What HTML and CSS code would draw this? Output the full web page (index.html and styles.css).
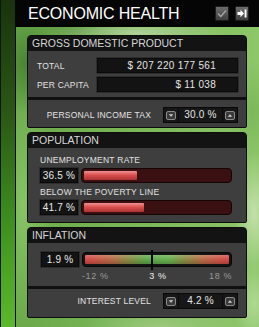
FILE: index.html
```html
<!DOCTYPE html>
<html>
<head>
<meta charset="utf-8">
<link rel="stylesheet" href="styles.css">
</head>
<body>
<div class="window">
  <div class="strip"></div>
  <div class="main">
    <header class="titlebar">
      <h1 class="title">ECONOMIC HEALTH</h1>
      <div class="tbtns">
        <div class="tbtn">
          <svg width="10" height="9" viewBox="0 0 10 9"><path d="M1 4.5 L3.8 7.5 L9 1.5" fill="none" stroke="#a8a8a8" stroke-width="1.3"/></svg>
        </div>
        <div class="tbtn">
          <svg width="10" height="9" viewBox="0 0 10 9"><path d="M0.5 3 H3.5 V0.8 L7 4.5 L3.5 8.2 V6 H0.5 Z" fill="#fff"/><rect x="7.6" y="0.5" width="1.9" height="8" fill="#fff"/></svg>
        </div>
      </div>
    </header>
    <div class="map">
      <div class="panel">
        <section class="sec">
          <div class="sec-head">GROSS DOMESTIC PRODUCT</div>
          <div class="gdp-body">
            <div class="kv"><span class="lbl">TOTAL</span><span class="valbox">$ 207 220 177 561</span></div>
            <div class="kv"><span class="lbl">PER CAPITA</span><span class="valbox">$ 11 038</span></div>
          </div>
          <div class="foot foot-tax">
            <span class="lbl">PERSONAL INCOME TAX</span>
            <div class="spinner">
              <div class="sbtn"><svg width="10" height="9" viewBox="0 0 10 9"><rect x="0.5" y="0.5" width="9" height="8" rx="1.5" fill="#3a3a3a" stroke="#8a8a8a"/><path d="M2.8 3.2 H7.2 L5 5.8 Z" fill="#cfcfcf"/></svg></div>
              <div class="sval">30.0 %</div>
              <div class="sbtn"><svg width="10" height="9" viewBox="0 0 10 9"><rect x="0.5" y="0.5" width="9" height="8" rx="1.5" fill="#3a3a3a" stroke="#8a8a8a"/><path d="M2.8 5.8 H7.2 L5 3.2 Z" fill="#cfcfcf"/></svg></div>
            </div>
          </div>
        </section>

        <section class="sec">
          <div class="sec-head">POPULATION</div>
          <div class="pop-body">
            <div class="mlabel">UNEMPLOYMENT RATE</div>
            <div class="meter">
              <div class="pct">36.5 %</div>
              <div class="rbar"><div class="rfill" style="width:36.5%"></div></div>
            </div>
            <div class="mlabel second">BELOW THE POVERTY LINE</div>
            <div class="meter">
              <div class="pct">41.7 %</div>
              <div class="rbar"><div class="rfill" style="width:41.7%"></div></div>
            </div>
          </div>
        </section>

        <section class="sec">
          <div class="sec-head">INFLATION</div>
          <div class="inf-body">
            <div class="meter">
              <div class="pct">1.9 %</div>
              <div class="gbar"><div class="gfill"></div><div class="marker" style="left:46.3%"></div></div>
            </div>
            <div class="scale">
              <span class="s-min">-12 %</span>
              <span class="s-mid">3 %</span>
              <span class="s-max">18 %</span>
            </div>
          </div>
          <div class="foot foot-int">
            <span class="lbl">INTEREST LEVEL</span>
            <div class="spinner">
              <div class="sbtn"><svg width="10" height="9" viewBox="0 0 10 9"><rect x="0.5" y="0.5" width="9" height="8" rx="1.5" fill="#3a3a3a" stroke="#8a8a8a"/><path d="M2.8 3.2 H7.2 L5 5.8 Z" fill="#cfcfcf"/></svg></div>
              <div class="sval">4.2 %</div>
              <div class="sbtn"><svg width="10" height="9" viewBox="0 0 10 9"><rect x="0.5" y="0.5" width="9" height="8" rx="1.5" fill="#3a3a3a" stroke="#8a8a8a"/><path d="M2.8 5.8 H7.2 L5 3.2 Z" fill="#cfcfcf"/></svg></div>
            </div>
          </div>
        </section>
      </div>
    </div>
  </div>
</div>
</body>
</html>
```

FILE: styles.css
```css
* { box-sizing: border-box; margin: 0; padding: 0; }
html, body { width: 259px; height: 327px; overflow: hidden; background: #000; }
body { font-family: "Liberation Sans", Arial, sans-serif; color: #dcdcdc; }

.window { display: flex; height: 327px; }

.strip {
  width: 16px; flex: none;
  background: linear-gradient(#1a330d, #2a5816 35%, #449a22 75%, #5cb82c);
  border-left: 1px solid #0c1806;
  border-right: 1px solid #060606;
}

.main { flex: 1; display: flex; flex-direction: column; min-width: 0; }

.titlebar {
  height: 27px; flex: none; background: #050505;
  display: flex; align-items: center; justify-content: space-between;
  padding: 0 10px 0 12px;
}
.title { font-size: 16px; font-weight: normal; color: #fff; letter-spacing: -0.2px; line-height: 27px; }
.tbtns { display: flex; gap: 6px; }
.tbtn {
  width: 14px; height: 15px; border: 1px solid #1e1e1e; border-radius: 1px;
  background: linear-gradient(#6c6c6c, #3e3e3e);
  display: flex; align-items: center; justify-content: center;
}

.map {
  flex: 1; padding: 8px 12px 0 11px;
  background-color: #74b052;
  background-image:
    radial-gradient(ellipse 30px 50px at 4% 12%, #4a8434, transparent),
    radial-gradient(ellipse 30px 120px at 3% 60%, #88c466, transparent),
    radial-gradient(ellipse 90px 14px at 50% 2%, #b0d29a, transparent),
    radial-gradient(ellipse 60px 20px at 25% 1%, #5a9640, transparent),
    radial-gradient(ellipse 20px 60px at 98% 62%, #c4e0ac, transparent),
    radial-gradient(ellipse 20px 40px at 98% 92%, #b0d894, transparent),
    radial-gradient(ellipse 30px 50px at 97% 28%, #7cb85a, transparent),
    radial-gradient(ellipse 80px 20px at 60% 100%, #9cc87c, transparent),
    linear-gradient(90deg, #6aa84a, #7ab858 50%, #8ec66a);
}

.panel { width: 220px; display: flex; flex-direction: column; gap: 4px; }

.sec {
  border: 1px solid #0d0d0d; border-radius: 4px 4px 2px 2px;
  background: #3e3e3e; overflow: hidden;
}
.sec-head {
  height: 15px; background: #131313; color: #d6d6d6;
  font-size: 10.5px; line-height: 15px; padding-left: 4px;
}

.lbl { font-size: 8.5px; letter-spacing: 0.2px; color: #e2e2e2; }

.gdp-body { padding: 7px 8px 5px 9px; display: flex; flex-direction: column; gap: 4px; }
.kv { display: flex; align-items: center; height: 15px; }
.kv .lbl { width: 60px; flex: none; }
.valbox {
  flex: 1; height: 15px; background: #131313; border: 1px solid #0a0a0a;
  box-shadow: 0 0 0 1px #2e2e2e;
  text-align: right; padding-right: 21px;
  font-size: 10px; line-height: 13px; letter-spacing: 0.3px; color: #e4e4e4;
}

.foot {
  border-top: 3px solid #111;
  display: flex; justify-content: flex-end; align-items: center; gap: 12px;
  padding: 7px 8px 4px 8px;
}
.foot-int { padding: 4px 8px 8px 8px; }
.spinner {
  width: 75px; height: 16px; flex: none; display: flex;
  background: #171717; border: 1px solid #090909;
}
.sbtn { width: 15px; flex: none; display: flex; align-items: center; justify-content: center; }
.sbtn:first-child { border-right: 1px solid #0a0a0a; }
.sbtn:last-child { border-left: 1px solid #0a0a0a; }
.sval { flex: 1; text-align: center; font-size: 10px; line-height: 14px; color: #e6e6e6; letter-spacing: 0.2px; }

.pop-body { padding: 7px 14px 7px 12px; }
.mlabel { height: 11px; line-height: 11px; font-size: 8.5px; letter-spacing: 0.25px; color: #e2e2e2; margin-bottom: 2px; }
.mlabel.second { margin-top: 4px; }
.meter { display: flex; gap: 3px; height: 15px; }
.pct {
  width: 38px; flex: none; background: #131313; border: 1px solid #0a0a0a;
  box-shadow: 0 0 0 1px #2e2e2e;
  font-size: 10px; line-height: 13px; text-align: center; color: #e8e8e8; letter-spacing: 0.2px;
}
.rbar {
  flex: 1; background: #3a1012; border: 1px solid #160505; border-radius: 4px;
  padding: 2px; display: flex;
}
.rfill {
  height: 100%; border-radius: 1px;
  background: linear-gradient(#f29292, #d85050 45%, #ae3030);
}

.inf-body { padding: 9px 14px 4px 13px; }
.gbar {
  flex: 1; position: relative; background: #141414; border: 1px solid #070707;
  border-radius: 4px; padding: 2px;
}
.gfill {
  height: 100%; border-radius: 1px;
  background:
    linear-gradient(rgba(255,255,255,0.22), rgba(255,255,255,0) 50%, rgba(0,0,0,0.2)),
    linear-gradient(90deg, #d84848, #b86a48 18%, #8a8a44 30%, #5ea84a 42%, #66b050 58%, #8a8a44 70%, #b86a48 82%, #d84848);
}
.marker {
  position: absolute; top: -3px; bottom: -4px; width: 2px; margin-left: -1px;
  background: #050505;
}
.scale {
  margin: 3px 0 0 41px; height: 12px; line-height: 12px;
  display: grid; grid-template-columns: 1fr auto 1fr;
  font-size: 9px; letter-spacing: 0.6px;
}
.s-min { justify-self: start; color: #9a9a9a; }
.s-mid { justify-self: center; color: #eeeeee; padding-left: 2px; }
.s-max { justify-self: end; color: #9a9a9a; }
```
